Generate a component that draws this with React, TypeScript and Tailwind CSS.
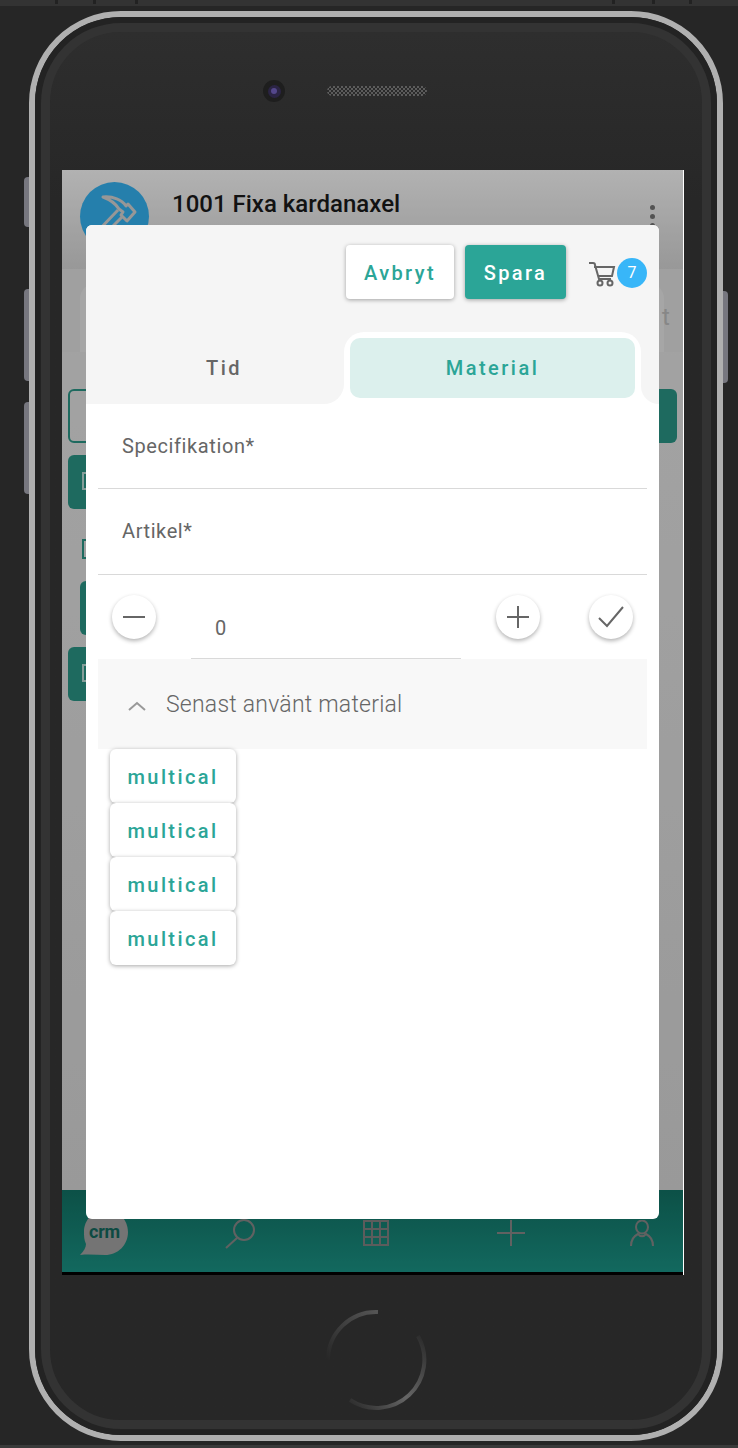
const materials = ['multical', 'multical', 'multical', 'multical'];

function RoundButton({ children }: { children: React.ReactNode }) {
  return (
    <button className="w-[44px] h-[44px] rounded-full bg-white flex items-center justify-center shadow-[0_2px_4px_rgba(0,0,0,0.3)]">
      {children}
    </button>
  );
}

function NavBar() {
  return (
    <div className="h-[85px] shrink-0 bg-gradient-to-b from-[#127466] to-[#1b9688] flex items-start pl-[18px] pt-[27px] border-b-[3px] border-black">
      <div className="relative w-[48px] h-[50px] mt-[-12px] shrink-0">
        <svg width="48" height="50" viewBox="0 0 48 50">
          <path d="M0 50 C4 46 6 42 6 39 C4 35 4 31 4 27 C4 14 14 5 26 5 C38 5 48 14 48 27 C48 40 38 50 25 50 C17 50 9 49 0 50 Z" fill="#a6a6a6" />
        </svg>
        <span className="absolute left-[9px] top-[17px] text-[18px] leading-[20px] font-bold tracking-[-0.2px] text-[#136b5f]">crm</span>
      </div>
      <svg className="ml-[97px] mt-[2px] shrink-0" width="30" height="30" viewBox="0 0 30 30" fill="none" stroke="#8c8c8c" strokeWidth="2">
        <circle cx="19" cy="11" r="10" />
        <path d="M12 19 L1 29" />
      </svg>
      <svg className="ml-[108px] mt-[3px] shrink-0" width="26" height="26" viewBox="0 0 26 26" fill="none" stroke="#858585" strokeWidth="2">
        <rect x="1" y="1" width="24" height="24" />
        <path d="M9 1 V25 M17 1 V25 M1 9 H25 M1 17 H25" />
      </svg>
      <svg className="ml-[108px] mt-[3px] shrink-0" width="28" height="26" viewBox="0 0 28 26" fill="none" stroke="#8c8c8c" strokeWidth="2">
        <path d="M14 0 V26 M0 13 H28" />
      </svg>
      <svg className="ml-[105px] mt-[3px] shrink-0" width="24" height="26" viewBox="0 0 24 26" fill="none" stroke="#8c8c8c" strokeWidth="2">
        <ellipse cx="12" cy="7" rx="6" ry="6.5" />
        <path d="M1 26 C1 19 4 16 8 14 C10 17 14 17 16 14 C20 16 23 19 23 26" />
      </svg>
    </div>
  );
}

function ScreenBehind() {
  return (
    <div className="flex-1 bg-gradient-to-b from-[#ececec] to-[#dcdcdc] flex flex-col min-h-0">
      <div className="h-[99px] shrink-0 bg-gradient-to-b from-[#ffffff] to-[#dadada] flex pl-[18px] pt-[12px]">
        <div className="w-[69px] h-[69px] rounded-full bg-[#36b7f6] flex items-start justify-center pt-[11px]">
          <svg width="44" height="46" viewBox="0 0 44 46" fill="none" stroke="#d8d8d8" strokeWidth="3" strokeLinejoin="round">
            <path d="M10 4 C20 3 29 7 33 13 L35 11 L42 19 L34 28 L28 22 L30 19 L26 16 C23 11 18 7 10 4 Z" />
            <path d="M25 17 L3 40 L8 45 L30 23" />
          </svg>
        </div>
        <div className="ml-[23px] mt-[7px] text-[24px] leading-[30px] font-medium text-[#1a1a1a]">1001 Fixa kardanaxel</div>
        <div className="ml-auto mr-[28px] mt-[23px] flex flex-col gap-[4px]">
          <span className="w-[5px] h-[5px] rounded-full bg-[#777]" />
          <span className="w-[5px] h-[5px] rounded-full bg-[#777]" />
          <span className="w-[5px] h-[5px] rounded-full bg-[#777]" />
        </div>
      </div>
      <div className="h-[83px] shrink-0 bg-[#e6e6e6] flex items-start pl-[18px] pt-[14px]">
        <div className="w-[584px] h-[69px] rounded-t-[16px] bg-[#eeeeee]" />
        <span className="ml-[-2px] mt-[20px] text-[24px] leading-[28px] text-[#c2c2c2]">t</span>
      </div>
      <div className="pt-[37px] pl-[6px] pr-[6px] flex flex-col">
        <div className="flex justify-between">
          <div className="w-[200px] h-[54px] rounded-md border-2 border-[#2b9989]" />
          <div className="w-[200px] h-[54px] rounded-md bg-[#2b9989]" />
        </div>
        <div className="w-[200px] h-[54px] mt-[12px] rounded-md bg-[#2b9989] pl-[14px] pt-[17px]">
          <div className="w-[8px] h-[18px] border-2 border-white/70" />
        </div>
        <div className="pl-[14px] mt-[30px] h-[14px]">
          <div className="w-[8px] h-[20px] border-2 border-[#2b9989]" />
        </div>
        <div className="ml-[12px] w-[200px] h-[54px] mt-[28px] rounded-md bg-[#2b9989]" />
        <div className="w-[200px] h-[54px] mt-[12px] rounded-md bg-[#2b9989] pl-[14px] pt-[17px]">
          <div className="w-[8px] h-[18px] border-2 border-white/70" />
        </div>
      </div>
    </div>
  );
}

function Modal() {
  return (
    <div className="absolute left-[24px] top-[55px] w-[573px] h-[994px] bg-white rounded-[6px] overflow-hidden flex flex-col">
      <div className="h-[107px] shrink-0 bg-[#f5f5f5] flex items-start pt-[20px] pl-[260px]">
        <button className="w-[108px] h-[54px] pt-[1px] bg-white rounded-[4px] text-[20px] font-medium tracking-[2.4px] text-[#2ba597] shadow-[0_1px_4px_rgba(0,0,0,0.35)]">Avbryt</button>
        <button className="ml-[11px] w-[101px] h-[54px] pt-[1px] bg-[#2ba597] rounded-[4px] text-[20px] font-medium tracking-[2.4px] text-white shadow-[0_1px_4px_rgba(0,0,0,0.35)]">Spara</button>
        <svg className="ml-[22px] mt-[16px]" width="28" height="26" viewBox="0 0 28 26" fill="none" stroke="#666" strokeWidth="2">
          <path d="M1 2 H5 C6 2 7 3 7 4 L11 18 H23" />
          <path d="M6 6 H26 L24 15 L10 15" />
          <circle cx="12" cy="22" r="2.5" />
          <circle cx="22" cy="22" r="2.5" />
        </svg>
        <span className="ml-[1px] mt-[13px] w-[30px] h-[30px] rounded-full bg-[#38b6f8] text-white text-[16px] flex items-center justify-center">7</span>
      </div>
      <div className="h-[72px] shrink-0 flex bg-white text-[20px] font-medium tracking-[2.5px]">
        <div className="w-[258px] bg-[#f5f5f5] rounded-br-[20px] flex items-center justify-center text-[#666] pb-[1px] pl-[18px]">Tid</div>
        <div className="w-[297px] bg-[#f5f5f5]">
          <div className="h-full bg-white rounded-t-[20px] p-[6px]">
            <div className="h-full bg-[#dcf0ed] rounded-[10px] flex items-center justify-center text-[#2ba597]">Material</div>
          </div>
        </div>
        <div className="w-[18px] bg-[#f5f5f5] rounded-bl-[20px]" />
      </div>
      <div className="px-[12px] flex flex-col">
        <div className="h-[85px] border-b border-[#d9d9d9] pl-[24px] pt-[29px] text-[20px] leading-[26px] tracking-[0.6px] text-[#666]">Specifikation*</div>
        <div className="h-[86px] border-b border-[#d9d9d9] pl-[24px] pt-[29px] text-[20px] leading-[26px] tracking-[0.6px] text-[#666]">Artikel*</div>
        <div className="h-[84px] flex items-start pt-[20px] pl-[14px]">
          <RoundButton>
            <svg width="26" height="26" viewBox="0 0 26 26" stroke="#666" strokeWidth="2"><path d="M2 13 H24" /></svg>
          </RoundButton>
          <div className="ml-[35px] w-[270px] h-[64px] border-b border-[#d9d9d9] pl-[24px] pt-[20px] text-[20px] leading-[26px] text-[#666]">0</div>
          <div className="ml-[35px]">
            <RoundButton>
              <svg width="26" height="26" viewBox="0 0 26 26" stroke="#666" strokeWidth="2"><path d="M13 2 V24 M2 13 H24" /></svg>
            </RoundButton>
          </div>
          <div className="ml-[49px]">
            <RoundButton>
              <svg width="30" height="26" viewBox="0 0 30 26" fill="none" stroke="#666" strokeWidth="2"><path d="M3 14 L11 22 L27 3" /></svg>
            </RoundButton>
          </div>
        </div>
        <div className="h-[90px] bg-[#f8f8f8] flex items-center pl-[29px] pt-[3px]">
          <svg width="20" height="12" viewBox="0 0 20 12" fill="none" stroke="#999" strokeWidth="2"><path d="M2 10 L10 3 L18 10" /></svg>
          <span className="ml-[19px] text-[23px] font-light tracking-[0.23px] text-[#666]">Senast använt material</span>
        </div>
        <div className="pl-[12px] flex flex-col items-start">
          {materials.map((m, i) => (
            <button key={i} className="w-[126px] h-[54px] pt-[1px] bg-white rounded-[6px] text-[20px] font-medium tracking-[2.4px] text-[#2ba597] shadow-[0_1px_4px_rgba(0,0,0,0.35)]">{m}</button>
          ))}
        </div>
      </div>
    </div>
  );
}

export default function App() {
  return (
    <div className="relative w-[738px] h-[1448px] overflow-hidden bg-[#262626] font-['Roboto',sans-serif]">
      <div className="h-[6px] bg-[#333] flex">
        <span className="ml-[55px] w-[3px] h-[4px] bg-[#222]" />
        <span className="ml-[35px] w-[3px] h-[4px] bg-[#222]" />
        <span className="ml-[39px] w-[3px] h-[4px] bg-[#222]" />
        <span className="ml-[474px] w-[3px] h-[4px] bg-[#222]" />
        <span className="ml-[37px] w-[3px] h-[4px] bg-[#222]" />
        <span className="ml-[34px] w-[3px] h-[4px] bg-[#222]" />
      </div>

      {/* side buttons */}
      <div className="absolute left-[24px] top-[177px] w-[5px] h-[50px] rounded-l-sm bg-[#77777f]" />
      <div className="absolute left-[24px] top-[289px] w-[5px] h-[92px] rounded-l-sm bg-[#77777f]" />
      <div className="absolute left-[24px] top-[402px] w-[5px] h-[92px] rounded-l-sm bg-[#77777f]" />
      <div className="absolute left-[723px] top-[291px] w-[5px] h-[92px] rounded-r-sm bg-[#77777f]" />

      <div className="ml-[29px] mt-[5px] w-[694px] h-[1430px] rounded-[92px] border-[6px] border-[#b0b0b0]">
        <div className="h-full p-[6px] rounded-[86px] bg-[#232323]">
          <div className="h-full rounded-[80px] border-[9px] border-[#333] bg-gradient-to-b from-[#2e2e2e] to-[#272727] to-[12%]">
            <div className="flex items-center h-[138px] shrink-0 pb-[20px] pl-[213px]">
              <div className="w-[22px] h-[22px] rounded-full bg-[#1e1e1e] flex items-center justify-center">
                <div className="w-[13px] h-[13px] rounded-full bg-[#2b2444] flex items-center justify-center">
                  <div className="w-[6px] h-[6px] rounded-full bg-[#54478c]" />
                </div>
              </div>
              <div className="ml-[42px] w-[100px] h-[10px] rounded-full bg-[repeating-conic-gradient(#5c5c5c_0_25%,#2a2a2a_0_50%)] bg-[length:4px_4px]" />
            </div>

            <div className="relative ml-[12px] w-[622px] h-[1105px] flex flex-col overflow-hidden border-r border-white">
              <ScreenBehind />
              <NavBar />
              <div className="absolute inset-0 bg-black/30" />
              <Modal />
            </div>

            <div className="flex justify-center mt-[33px]">
              <svg width="104" height="104" viewBox="0 0 104 104" fill="none" strokeWidth="4">
                <defs>
                  <linearGradient id="ringA" x1="1" y1="0" x2="0" y2="1">
                    <stop offset="0" stopColor="#555" />
                    <stop offset="1" stopColor="#272727" />
                  </linearGradient>
                  <linearGradient id="ringB" x1="1" y1="0" x2="0" y2="1">
                    <stop offset="0" stopColor="#2a2a2a" />
                    <stop offset="0.55" stopColor="#666" />
                    <stop offset="1" stopColor="#2a2a2a" />
                  </linearGradient>
                </defs>
                <path d="M54 4 A48 48 0 0 0 4 52" stroke="url(#ringA)" />
                <path d="M94 28 A48 48 0 0 1 26 92" stroke="url(#ringB)" />
              </svg>
            </div>
          </div>
        </div>
      </div>
      <div className="absolute left-0 right-0 bottom-0 h-[3px] bg-[#3a3a3a]" />
    </div>
  );
}
